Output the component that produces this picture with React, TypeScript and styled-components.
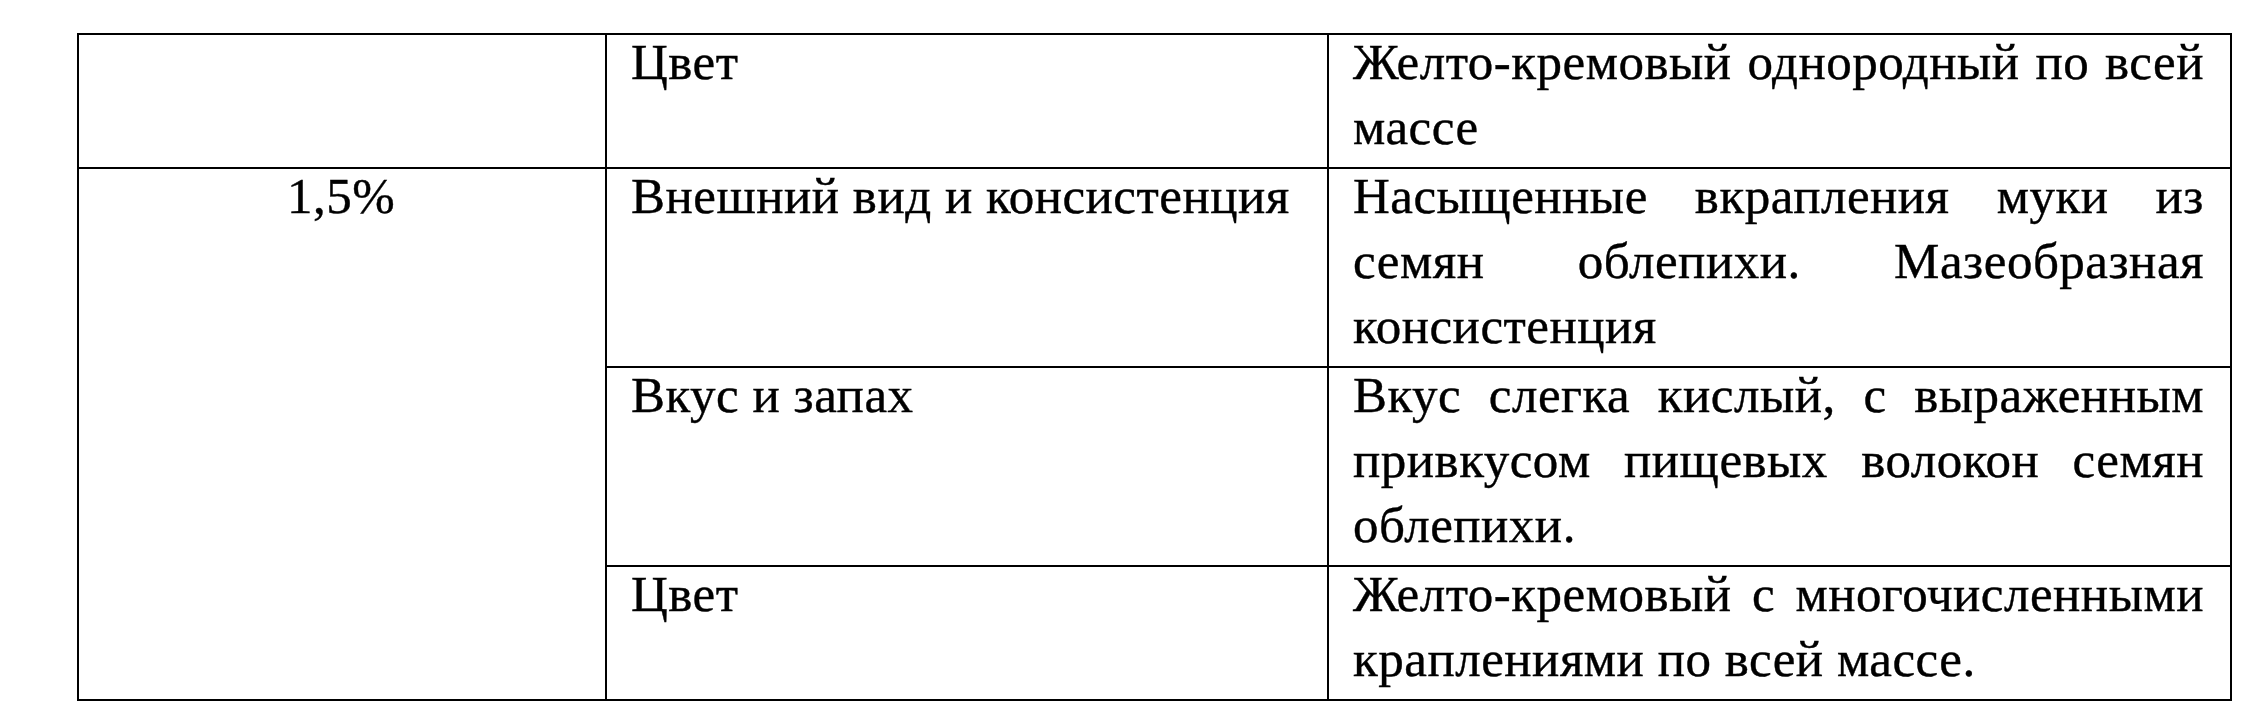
import React from 'react';
import styled, { createGlobalStyle } from 'styled-components';

const GlobalStyle = createGlobalStyle`
  body {
    margin: 0;
    background: #fff;
    color: #000;
    font-family: "Liberation Serif", "Times New Roman", serif;
  }
`;

const Page = styled.div`
  padding: 33px 0 0 77px;
`;

const Table = styled.div`
  display: grid;
  grid-template-columns: 528px 722px 903px;
  width: max-content;
  border-top: 2px solid #000;
  border-left: 2px solid #000;
`;

interface CellProps {
  $align?: 'left' | 'center';
  $span?: number;
}
const Cell = styled.div<CellProps>`
  grid-row: span ${props => props.$span || 1};
  border-right: 2px solid #000;
  border-bottom: 2px solid #000;
  padding: 0 26px 7px 24px;
  text-align: ${props => props.$align || 'left'};
`;

const Lines = styled.div`
  margin-top: -5px;
  font-size: 51px;
  line-height: 65px;
  letter-spacing: 0.5px;
  -webkit-text-stroke: 0.4px #000;
`;

const Line = styled.div<{ $last?: boolean }>`
  text-align: justify;
  text-align-last: ${props => (props.$last ? 'left' : 'justify')};
`;

interface Row {
  name: string;
  text: string[];
}

const first: Row = {
  name: 'Цвет',
  text: ['Желто-кремовый однородный по всей', 'массе'],
};

const rows: Row[] = [
  {
    name: 'Внешний вид и консистенция',
    text: ['Насыщенные вкрапления муки из', 'семян облепихи. Мазеобразная', 'консистенция'],
  },
  {
    name: 'Вкус и запах',
    text: ['Вкус слегка кислый, с выраженным', 'привкусом пищевых волокон семян', 'облепихи.'],
  },
  {
    name: 'Цвет',
    text: ['Желто-кремовый с многочисленными', 'крaплениями по всей массе.'],
  },
];

const Description = ({ text }: { text: string[] }) => (
  <Cell>
    <Lines>
      {text.map((line, i) => (
        <Line key={i} $last={i === text.length - 1}>
          {line}
        </Line>
      ))}
    </Lines>
  </Cell>
);

const Name = ({ name }: { name: string }) => (
  <Cell>
    <Lines>{name}</Lines>
  </Cell>
);

const App = () => (
  <Page>
    <GlobalStyle />
    <Table>
      <Cell />
      <Name name={first.name} />
      <Description text={first.text} />
      <Cell $align="center" $span={rows.length}>
        <Lines>1,5%</Lines>
      </Cell>
      {rows.map((row, i) => (
        <React.Fragment key={i}>
          <Name name={row.name} />
          <Description text={row.text} />
        </React.Fragment>
      ))}
    </Table>
  </Page>
);

export default App;
